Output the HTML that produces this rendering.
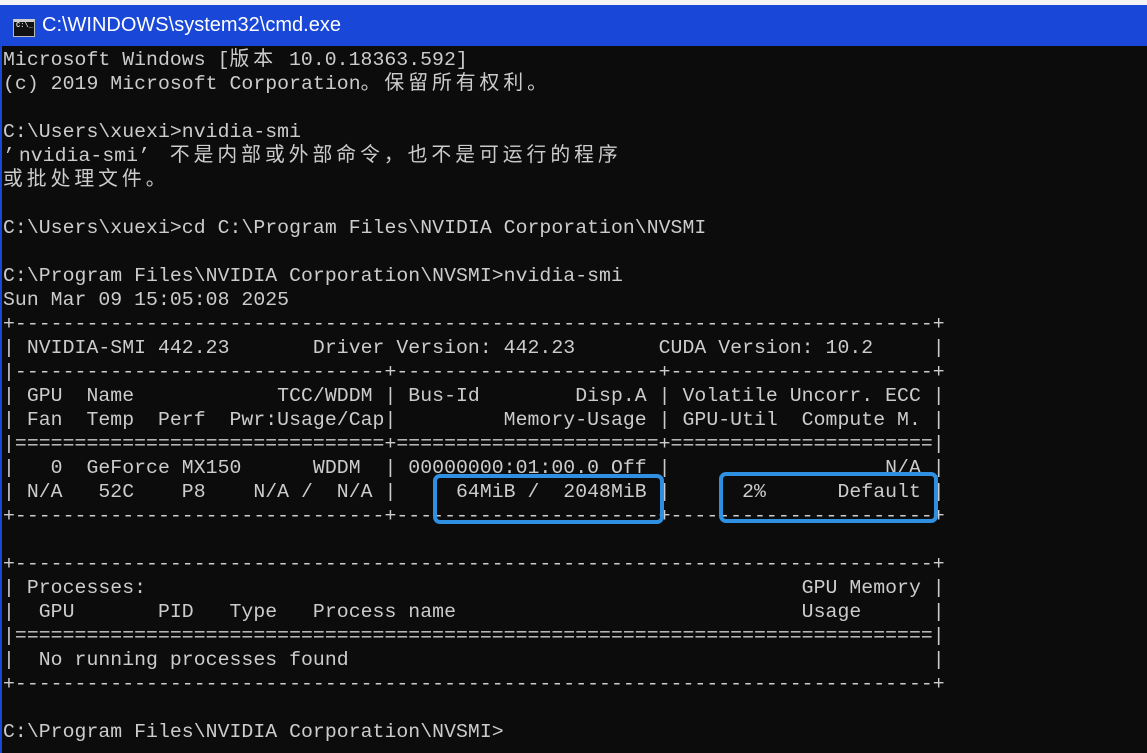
<!DOCTYPE html>
<html><head><meta charset="utf-8"><style>
html,body{margin:0;padding:0;width:1147px;height:753px;overflow:hidden;background:#0c0c0c;}
#top{position:absolute;left:0;top:0;width:1147px;height:5px;background:#f4f4f4;}
#tb{position:absolute;left:0;top:5px;width:1147px;height:41px;background:#1947d8;}
#tb .t{position:absolute;left:42px;top:9px;color:#fff;font:20px "Liberation Sans","Noto Sans CJK SC",sans-serif;}
#ic{position:absolute;left:13px;top:14px;width:20px;height:14px;background:#111;border:1px solid #bbb;border-top:3px solid #ccc;}
#ic span{position:absolute;left:2px;top:0;color:#ddd;font:bold 7px "Liberation Mono",monospace;}
#lb{position:absolute;left:0;top:46px;width:2px;height:707px;background:#1947d8;}
pre{position:absolute;left:3px;top:48px;margin:0;color:#cccccc;font:19.8px/24px "Liberation Mono","Noto Sans CJK SC",monospace;letter-spacing:0.05px;}
.c{letter-spacing:4px;}
.b{position:absolute;border:4px solid #2f8fe0;border-radius:7px;}
</style></head><body>
<div id="top"></div>
<div id="tb"><div id="ic"><span>C:\_</span></div><div class="t">C:\WINDOWS\system32\cmd.exe</div></div>
<div id="lb"></div>
<pre>Microsoft Windows [<span class="c">版本</span> 10.0.18363.592]
(c) 2019 Microsoft Corporation<span class="c">。保留所有权利。</span>

C:\Users\xuexi&gt;nvidia-smi
<span class="c">’</span>nvidia-smi<span class="c">’ 不是内部或外部命令，也不是可运行的程序</span>
<span class="c">或批处理文件。</span>

C:\Users\xuexi&gt;cd C:\Program Files\NVIDIA Corporation\NVSMI

C:\Program Files\NVIDIA Corporation\NVSMI&gt;nvidia-smi
Sun Mar 09 15:05:08 2025
+-----------------------------------------------------------------------------+
| NVIDIA-SMI 442.23       Driver Version: 442.23       CUDA Version: 10.2     |
|-------------------------------+----------------------+----------------------+
| GPU  Name            TCC/WDDM | Bus-Id        Disp.A | Volatile Uncorr. ECC |
| Fan  Temp  Perf  Pwr:Usage/Cap|         Memory-Usage | GPU-Util  Compute M. |
|===============================+======================+======================|
|   0  GeForce MX150      WDDM  | 00000000:01:00.0 Off |                  N/A |
| N/A   52C    P8    N/A /  N/A |     64MiB /  2048MiB |      2%      Default |
+-------------------------------+----------------------+----------------------+

+-----------------------------------------------------------------------------+
| Processes:                                                       GPU Memory |
|  GPU       PID   Type   Process name                             Usage      |
|=============================================================================|
|  No running processes found                                                 |
+-----------------------------------------------------------------------------+

C:\Program Files\NVIDIA Corporation\NVSMI&gt;</pre>
<div class="b" style="left:433px;top:474px;width:223px;height:42px;"></div>
<div class="b" style="left:719px;top:472px;width:211px;height:43px;"></div>
</body></html>
